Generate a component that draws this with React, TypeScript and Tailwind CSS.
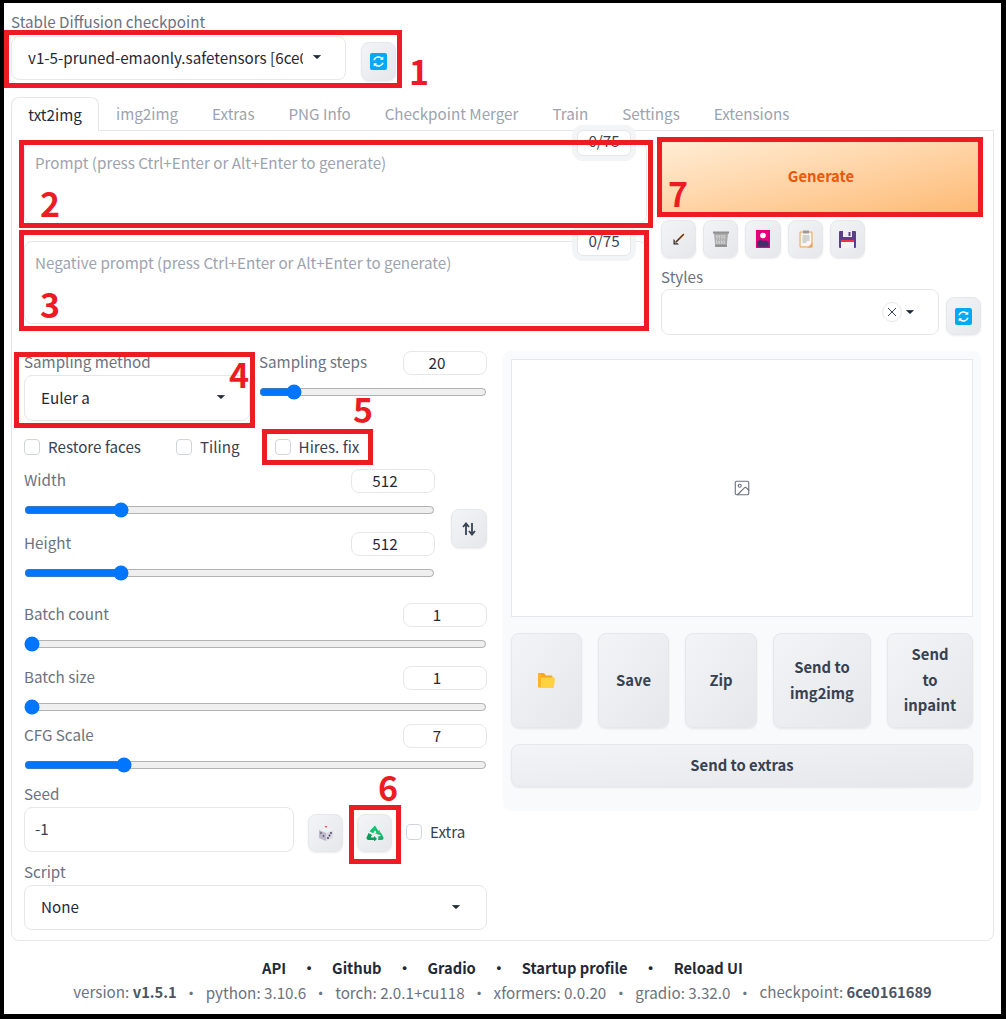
import React from "react";
import { Image as ImageIcon } from "lucide-react";

const btn =
  "flex items-center justify-center rounded-lg border border-[#e5e7eb] bg-linear-to-br from-[#f3f4f6] to-[#e5e7eb] shadow-[0_1px_2px_rgba(0,0,0,0.08)]";
const field = "rounded-lg border border-[#e5e7eb] bg-white";

function Arrow() {
  return (
    <svg width="8" height="4" viewBox="0 0 8 4" className="shrink-0">
      <path d="M0.300 0.300h7.400L4 3.700z" fill="#1f2937" stroke="#1f2937" strokeWidth="0.500" strokeLinejoin="round" />
    </svg>
  );
}

function Refresh() {
  return (
    <svg width="17" height="17" viewBox="0 0 17 17">
      <rect width="17" height="17" rx="2" fill="#03a9f4" />
      <path d="M4 7.200a4.700 4.700 0 0 1 8-1.600" fill="none" stroke="#fff" strokeWidth="1.600" />
      <path d="M13.300 3.400v3.400h-3.400z" fill="#fff" />
      <path d="M13 9.800a4.700 4.700 0 0 1-8 1.600" fill="none" stroke="#fff" strokeWidth="1.600" />
      <path d="M3.700 13.600v-3.400h3.400z" fill="#fff" />
    </svg>
  );
}

function ArrowDL() {
  return (
    <svg width="13" height="13" viewBox="0 0 13 13">
      <path d="M11.800 1.200L4 9" stroke="#e08a3c" strokeWidth="1.800" />
      <path d="M11.800 1.200L3.500 9.500" stroke="#2b3344" strokeWidth="1.100" />
      <path d="M1.500 6v5.500H7L5.800 10.200H2.800V7.200z" fill="#2b2b2b" />
    </svg>
  );
}

function Trash() {
  return (
    <svg width="18" height="18" viewBox="0 0 18 18">
      <path d="M2 3.200h14l-1.300 13.600H3.300z" fill="#a9a9a9" />
      <path d="M4 5l1.500 3L4 11l1.500 3M6.500 5L8 8l-1.500 3L8 14M9 5l1.500 3L9 11l1.500 3M11.500 5L13 8l-1.500 3L13 14M5.500 5L4 8M8 5L6.500 8M10.500 5L9 8M13 5l-1.500 3M5.500 11L4 14M8 11l-1.500 3M10.500 11L9 14M13 11l-1.500 3" fill="none" stroke="#e4e4e4" strokeWidth="0.600" />
      <rect x="1" y="1.500" width="16" height="2.200" fill="#929292" />
      <rect x="3" y="14.800" width="12" height="2" fill="#8e8e8e" />
    </svg>
  );
}

function Picture() {
  return (
    <svg width="14" height="18" viewBox="0 0 14 18">
      <rect width="14" height="18" fill="#e6007e" />
      <path d="M1.300 16.700v-5l3.500-2.200 2.600 1.700 2-1 3.300 2v4.500z" fill="#43306b" />
      <circle cx="7" cy="5.500" r="2.800" fill="#fff" />
    </svg>
  );
}

function Clipboard() {
  return (
    <svg width="14" height="18" viewBox="0 0 14 18">
      <rect x="0.500" y="1.500" width="13" height="16" rx="1" fill="#e8a862" />
      <rect x="1.600" y="2.600" width="10.800" height="13.800" fill="#fbf7ef" />
      <path d="M13.500 12.500v4a1 1 0 0 1-1 1h-4z" fill="#e8a862" />
      <rect x="4" y="0.500" width="6" height="3" fill="#9b9b9b" />
      <path d="M3.500 6h7M3.500 8h7M3.500 10h7M3.500 12h4" stroke="#9a9a9a" strokeWidth="0.800" />
    </svg>
  );
}

function Floppy() {
  return (
    <svg width="17" height="17" viewBox="0 0 17 17">
      <path d="M1 0h15a1 1 0 0 1 1 1v15a1 1 0 0 1-1 1H1a1 1 0 0 1-1-1V1a1 1 0 0 1 1-1z" fill="#5b3f8c" />
      <rect x="4" y="0" width="9" height="6" fill="#f2eef8" />
      <rect x="9.500" y="1" width="2" height="4" fill="#5b3f8c" />
      <rect x="2" y="9" width="13" height="8" fill="#f3f1f4" />
      <rect x="2" y="9" width="13" height="2" fill="#e9344a" />
    </svg>
  );
}

function Dice() {
  return (
    <svg width="16" height="17" viewBox="0 0 16 17">
      <path d="M8 2l7 3-7 3-7-3z" fill="#f1eff3" />
      <path d="M1 5l7 3v8l-7-3z" fill="#bdb7ca" />
      <path d="M15 5L8 8v8l7-3z" fill="#dedae4" />
      <ellipse cx="8" cy="1.800" rx="1.300" ry="0.700" fill="#e0483c" />
      <circle cx="3" cy="8" r="0.800" fill="#3a3550" />
      <circle cx="5.500" cy="11" r="0.800" fill="#3a3550" />
      <circle cx="10" cy="13" r="0.900" fill="#3a3550" />
      <circle cx="11.500" cy="10.500" r="0.900" fill="#3a3550" />
      <circle cx="13" cy="8" r="0.900" fill="#3a3550" />
    </svg>
  );
}

function Recycle() {
  return (
    <svg width="18" height="16" viewBox="0 0 18 16">
      <path d="M9 0.500l3.400 5.400 1.500-0.900-0.300 5-4.600-1.800 1.400-0.800L9 5.300 7.200 8.300 3.500 6.200z" fill="#12c26e" />
      <path d="M2.500 8l3.600 2-1.500 2.500h3.400V10.900l3 2.900-3 2.900v-1.600H2.500a2 2 0 0 1-1.700-3z" fill="#0a9c58" />
      <path d="M14.800 7.500l2.400 4.500a2 2 0 0 1-1.700 3h-3.200v-3.800h2.600l-.1-.1-1.800-3z" fill="#0fb566" />
    </svg>
  );
}

function Folder() {
  return (
    <svg width="17" height="15" viewBox="0 0 17 15">
      <path d="M1 0h5l2 2.500h5.500a1 1 0 0 1 1 1V6H0V1a1 1 0 0 1 1-1z" fill="#f6a821" />
      <path d="M3 4.500h13a1 1 0 0 1 1 1.200l-1.200 8.300a1 1 0 0 1-1 1H1a1 1 0 0 1-1-1V5.500z" fill="#ffd23f" />
      <path d="M0 1h3v13H1a1 1 0 0 1-1-1z" fill="#f9b52c" />
    </svg>
  );
}

function Swap() {
  return (
    <svg width="14" height="14" viewBox="0 0 14 14">
      <path d="M4 13V2M1 5l3-3.500L7 5" fill="none" stroke="#374151" strokeWidth="1.800" />
      <path d="M10 1v11M7 9l3 3.500L13 9" fill="none" stroke="#374151" strokeWidth="1.800" />
    </svg>
  );
}

function Check({ label, className = "" }: { label: string; className?: string }) {
  return (
    <div className={`flex items-center gap-2 ${className}`}>
      <span className="block size-4 rounded-[4px] border border-[#d1d5db] bg-white" />
      <span className="pb-[2px] text-[#374151]">{label}</span>
    </div>
  );
}

function SliderBlock({
  label,
  value,
  min,
  max,
  className = "",
}: {
  label: string;
  value: number;
  min: number;
  max: number;
  className?: string;
}) {
  return (
    <div className={className}>
      <div className="flex h-6 items-center justify-between">
        <span className="pb-[3px] text-[#6b7280]">{label}</span>
        <div className={`flex h-6 w-[84px] items-center justify-center pr-4 pb-px text-[#1f2937] ${field}`}>{value}</div>
      </div>
      <input
        type="range"
        readOnly
        min={min}
        max={max}
        value={value}
        className="m-0 mt-[9px] block h-4 w-full accent-[#0075ff]"
      />
    </div>
  );
}

function Counter({ top }: { top: string }) {
  return (
    <div
      className={`absolute right-[15px] z-10 flex h-[26px] w-[54px] items-center justify-center rounded-md border border-[#e5e7eb] bg-white pb-[6px] text-[#374151] shadow-[0_0_0_5px_#f3f4f6] ${top}`}
    >
      0/75
    </div>
  );
}

function Mark({ box }: { box: string }) {
  return <div className={`pointer-events-none absolute z-20 border-[5px] border-[#ed1c24] ${box}`} />;
}

function Num({ n, pos }: { n: string; pos: string }) {
  return (
    <div className={`pointer-events-none absolute z-30 text-[34px] leading-none font-bold text-[#ed1c24] ${pos}`}>
      {n}
    </div>
  );
}

const links = ["API", "Github", "Gradio", "Startup profile", "Reload UI"];

function InfoDot() {
  return <span className="w-[29px] text-center">•</span>;
}

export default function App() {
  return (
    <div className="relative h-[1019px] w-[1006px] overflow-hidden border-t-[3px] border-r-[5px] border-b-[5px] border-l-[4px] border-black bg-white font-['Noto_Sans_CJK_SC','Source_Sans_Pro','Noto_Sans',sans-serif] text-[15.2px]">
      <div className="pt-[10px] pr-[7px] pl-[7px]">
        <div className="mb-[5px] h-[18px] leading-[16px] text-[#6b7280]">Stable Diffusion checkpoint</div>
        <div className="flex h-[45px]">
          <div className={`flex h-11 w-[335px] items-center pr-6 pb-[2px] pl-[16px] text-[#1f2937] ${field}`}>
            <div className="mr-[10px] w-[276px] overflow-hidden whitespace-nowrap">v1-5-pruned-emaonly.safetensors [6ce0161689]</div>
            <Arrow />
          </div>
          <div className={`mt-[6px] ml-[15px] h-[39px] w-[35px] ${btn}`}>
            <Refresh />
          </div>
        </div>

        <div className="mt-4 flex h-[34px] items-stretch border-b border-[#e5e7eb]">
          <div className="-mb-px flex w-[88px] items-center justify-center rounded-t-lg border border-b-0 border-[#e5e7eb] bg-white text-[#1f2937]">
            txt2img
          </div>
          {["img2img", "Extras", "PNG Info", "Checkpoint Merger", "Train", "Settings", "Extensions"].map((t) => (
            <div key={t} className="flex items-center px-[17px] text-[#9ca3af]">
              {t}
            </div>
          ))}
        </div>

        <div className="h-[810px] rounded-b-lg border border-t-0 border-[#e5e7eb] px-3 pt-[11px]">
          <div className="flex gap-[14px]">
            <div className="w-[623px]">
              <div className={`relative h-[82px] px-[10px] py-[8px] text-[#9ca3af] ${field}`}>
                Prompt (press Ctrl+Enter or Alt+Enter to generate)
                <Counter top="-top-[13px]" />
              </div>
              <div className={`relative mt-[17px] h-[83px] px-[10px] py-[9px] text-[#9ca3af] ${field}`}>
                Negative prompt (press Ctrl+Enter or Alt+Enter to generate)
                <Counter top="-top-[12px]" />
              </div>
            </div>
            <div className="w-[320px]">
              <div className="flex h-[70px] items-center justify-center bg-linear-to-br from-[#ffedd5] to-[#fdba74] pb-px text-[14.8px] font-semibold text-[#ea580c]">
                Generate
              </div>
              <div className="mt-2 flex gap-[7px]">
                <div className={`h-[38px] w-[35px] ${btn}`}><ArrowDL /></div>
                <div className={`h-[38px] w-[35px] ${btn}`}><Trash /></div>
                <div className={`h-[38px] w-[36px] ${btn}`}><Picture /></div>
                <div className={`h-[38px] w-[35px] ${btn}`}><Clipboard /></div>
                <div className={`h-[38px] w-[35px] ${btn}`}><Floppy /></div>
              </div>
              <div className="mt-[10px] mb-[3px] h-[18px] leading-[16px] text-[#6b7280]">Styles</div>
              <div className="flex">
                <div className={`flex h-[46px] w-[278px] items-center justify-end pr-[24px] ${field}`}>
                  <span className="mr-1 flex size-5 items-center justify-center rounded-full border border-[#e5e7eb] bg-white">
                    <svg width="10" height="10" viewBox="0 0 10 10">
                      <path d="M1 1l8 8M9 1l-8 8" stroke="#374151" strokeWidth="1" />
                    </svg>
                  </span>
                  <Arrow />
                </div>
                <div className={`mt-2 ml-[7px] h-[38px] w-[35px] ${btn}`}>
                  <Refresh />
                </div>
              </div>
            </div>
          </div>

          <div className="mt-4 flex gap-4">
            <div className="w-[463px]">
              <div className="flex gap-[9px]">
                <div className="w-[226px] pt-[2px]">
                  <div className="mb-[5px] h-[17px] leading-[16px] text-[#6b7280]">Sampling method</div>
                  <div className={`flex h-[46px] items-center justify-between pr-6 pb-[2px] pl-4 text-[#1f2937] ${field}`}>
                    Euler a
                    <Arrow />
                  </div>
                </div>
                <SliderBlock label="Sampling steps" value={20} min={1} max={150} className="w-[228px]" />
              </div>

              <div className="mt-[18px] flex h-4 items-center">
                <Check label="Restore faces" />
                <Check label="Tiling" className="ml-[35px]" />
                <Check label="Hires. fix" className="ml-[35px]" />
              </div>

              <div className="mt-[14px] flex gap-4">
                <div className="w-[411px]">
                  <SliderBlock label="Width" value={512} min={64} max={2048} />
                  <SliderBlock label="Height" value={512} min={64} max={2048} className="mt-[14px]" />
                </div>
                <div className={`mt-10 h-[39px] w-[36px] ${btn}`}>
                  <Swap />
                </div>
              </div>

              <SliderBlock label="Batch count" value={1} min={1} max={100} className="mt-[22px]" />
              <SliderBlock label="Batch size" value={1} min={1} max={8} className="mt-[14px]" />
              <SliderBlock label="CFG Scale" value={7} min={1} max={30} className="mt-[9px]" />

              <div className="mt-3 mb-1 h-[18px] leading-[16px] text-[#6b7280]">Seed</div>
              <div className="flex">
                <div className={`flex h-[45px] w-[270px] items-center px-[10px] pb-[2px] text-[#374151] ${field}`}>-1</div>
                <div className={`mt-[7px] ml-[14px] h-[38px] w-[35px] ${btn}`}><Dice /></div>
                <div className={`mt-[7px] ml-[14px] h-[38px] w-[35px] ${btn}`}>
                  <Recycle />
                </div>
                <Check label="Extra" className="mt-[7px] ml-[14px] h-[36px]" />
              </div>

              <div className="mt-[11px] mb-1 h-[18px] leading-[16px] text-[#6b7280]">Script</div>
              <div className={`flex h-[45px] items-center justify-between pr-[26px] pb-[2px] pl-4 text-[#1f2937] ${field}`}>
                None
                <Arrow />
              </div>
            </div>

            <div className="h-[460px] w-[478px] rounded-lg bg-[#f9fafb] p-2">
              <div className="flex h-[258px] items-center justify-center border border-[#e5e7eb] bg-white">
                <ImageIcon size={18} strokeWidth={1.5} color="#6b7280" />
              </div>
              <div className="mt-4 flex gap-4 text-center text-[14.8px] leading-[25.5px] font-semibold text-[#374151]">
                <div className={`h-[95px] w-[71px] ${btn}`}><Folder /></div>
                <div className={`h-[95px] w-[71px] pb-[2px] ${btn}`}>Save</div>
                <div className={`h-[95px] w-[72px] pb-[2px] ${btn}`}>Zip</div>
                <div className={`h-[95px] w-[98px] pb-[2px] ${btn}`}>Send to<br />img2img</div>
                <div className={`h-[95px] w-[86px] pb-[2px] ${btn}`}>Send<br />to<br />inpaint</div>
              </div>
              <div className={`mt-4 h-[43px] text-[14.8px] font-semibold text-[#374151] ${btn}`}>Send to extras</div>
            </div>
          </div>
        </div>

        <div className="mt-[15px] flex h-6 items-center justify-center text-[14.7px] font-semibold text-[#1f2937]">
          {links.map((l, i) => (
            <React.Fragment key={l}>
              {i > 0 && <span className="w-[46px] text-center">•</span>}
              <span>{l}</span>
            </React.Fragment>
          ))}
        </div>
        <div className="flex h-6 items-center justify-center text-[#6b7280]">
          <span>version: <b className="text-[14.7px] font-semibold text-[#4b5563]">v1.5.1</b></span>
          <InfoDot />
          <span>python: 3.10.6</span>
          <InfoDot />
          <span>torch: 2.0.1+cu118</span>
          <InfoDot />
          <span>xformers: 0.0.20</span>
          <InfoDot />
          <span>gradio: 3.32.0</span>
          <InfoDot />
          <span>checkpoint: <b className="text-[14.7px] font-semibold text-[#4b5563]">6ce0161689</b></span>
        </div>
      </div>

      <Mark box="left-0 top-[27px] h-[58px] w-[398px]" />
      <Mark box="left-[15px] top-[137px] h-[88px] w-[634px]" />
      <Mark box="left-[15px] top-[227px] h-[101px] w-[630px]" />
      <Mark box="left-[10px] top-[349px] h-[76px] w-[241px]" />
      <Mark box="left-[258px] top-[426px] h-[36px] w-[111px]" />
      <Mark box="left-[345px] top-[802px] h-[59px] w-[52px]" />
      <Mark box="left-[653px] top-[134px] h-[80px] w-[326px]" />
      <Num n="1" pos="left-[405px] top-[51px]" />
      <Num n="2" pos="left-[36px] top-[183px]" />
      <Num n="3" pos="left-[36px] top-[284px]" />
      <Num n="4" pos="left-[225px] top-[354px]" />
      <Num n="5" pos="left-[349px] top-[389px]" />
      <Num n="6" pos="left-[374px] top-[767px]" />
      <Num n="7" pos="left-[664px] top-[173px]" />
    </div>
  );
}
